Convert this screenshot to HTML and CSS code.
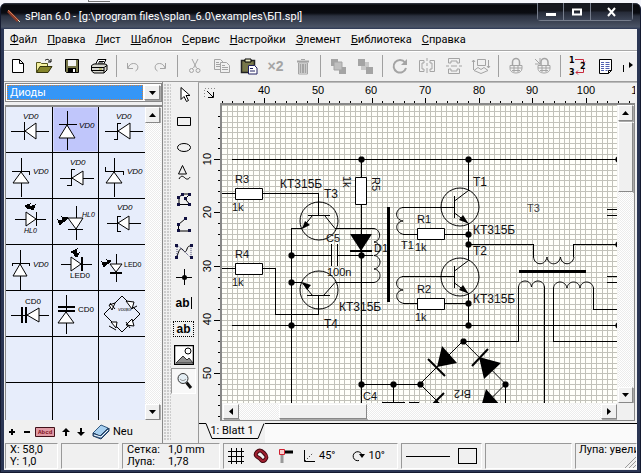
FILE: index.html
```html
<!DOCTYPE html>
<html lang="ru">
<head>
<meta charset="utf-8">
<title>sPlan 6.0</title>
<link rel="stylesheet" href="styles.css">
</head>
<body>
<div class="backdrop"><i></i></div>
<div class="window">
  <header class="titlebar">
    <svg class="app-icon" width="14" height="14" viewBox="0 0 14 14"><path d="M1 2 11 12" stroke="#8c3a28" stroke-width="3"/><path d="M1 1 12 12" stroke="#d08058"/><path d="M11 11l2 2" stroke="#f0e0c0"/></svg>
    <h1>sPlan 6.0 - [g:\program files\splan_6.0\examples\БП.spl]</h1>
    <div class="win-buttons">
      <button class="wb-min" aria-label="Свернуть"><svg width="12" height="10"><path d="M1 6h10v3H1z" fill="#fff"/></svg></button>
      <button class="wb-max" aria-label="Развернуть"><svg width="12" height="10"><path d="M2 2.500h8v5H2z" fill="none" stroke="#fff" stroke-width="2"/></svg></button>
      <button class="wb-close" aria-label="Закрыть"><svg width="12" height="10"><path d="M2 1l7 8M9 1 2 9" stroke="#fff" stroke-width="2"/></svg></button>
    </div>
  </header>

  <nav class="menu">
    <button><u>Ф</u>айл</button><button><u>П</u>равка</button><button><u>Л</u>ист</button><button><u>Ш</u>аблон</button><button><u>С</u>ервис</button><button><u>Н</u>астройки</button><button><u>Э</u>лемент</button><button><u>Б</u>иблиотека</button><button><u>С</u>правка</button>
  </nav>

  <div class="toolbar">
    <button aria-label="Новый"><svg class="ic" viewBox="0 0 20 20"><path d="M4.500 3.500h7l4 4v9h-11zM11.500 3.500v4h4" fill="#fff" stroke="#000"/></svg></button>
    <button aria-label="Открыть"><svg class="ic" viewBox="0 0 20 20"><path d="M1.500 16V6.500h4l1 1h6V10" fill="#f4f0a0" stroke="#55551a"/><path d="M1.500 16.500 5 10.500h12l-4 6z" fill="#85852a" stroke="#33330c"/><path d="M10 4.500c2-2 4-1 5 1M16 3v3h-3" fill="none" stroke="#000"/></svg></button>
    <button aria-label="Сохранить"><svg class="ic" viewBox="0 0 20 20"><path d="M3.500 3.500h13v13h-12l-1-1z" fill="#77774a" stroke="#000"/><path d="M6 4h8v6H6z" fill="#f4f4f4"/><path d="M6 12h8v5H6z" fill="#000"/><path d="M11 13h2v3h-2z" fill="#fff"/></svg></button>
    <button aria-label="Печать"><svg class="ic" viewBox="0 0 20 20"><path d="M6.500 8.500 9 3.500h8l-2.500 5z" fill="#fff" stroke="#000"/><path d="M10 5.500h5M9 7h5" stroke="#000"/><path d="M2.500 9.500 5 8h11l2 1v5l-3 3H5l-2.500-2z" fill="#d8d8d0" stroke="#000"/><path d="M2 11.500h13l3-2M3 14.500h12M15 12v5" stroke="#000" fill="none"/><path d="M10 13h3" stroke="#a0a020"/></svg></button>
    <span class="sep first"></span>
    <button disabled aria-label="Отменить"><svg class="ic gray" viewBox="0 0 20 20"><path d="M4.500 7v5.500H10M5 12c1-3 3-4.500 5.500-4.500 4 0 5 3 4 5.500-.5 1-1 1.500-2 2"/></svg></button>
    <button disabled aria-label="Вернуть"><svg class="ic gray" viewBox="0 0 20 20"><path d="M15.500 7v5.500H10M15 12c-1-3-3-4.500-5.500-4.500-4 0-5 3-4 5.500.5 1 1 1.500 2 2"/></svg></button>
    <span class="sep"></span>
    <button disabled aria-label="Вырезать"><svg class="ic gray" viewBox="0 0 20 20"><path d="M7 3l4.500 9M13 3l-4.500 9M8 12l-1 1M12 12l1 1"/><circle cx="6.500" cy="14.500" r="2"/><circle cx="13" cy="14.500" r="2"/></svg></button>
    <button disabled aria-label="Копировать"><svg class="ic gray" viewBox="0 0 20 20"><path d="M2.500 3.500h6l3 3v7h-9zM4 6.500h3M4 8.500h5M4 10.500h5"/><path d="M8.500 6.500h6l3 3v7h-9z" fill="#f0f0f0"/><path d="M10 9.500h3M10 11.500h6M10 13.500h6"/></svg></button>
    <button aria-label="Вставить"><svg class="ic" viewBox="0 0 20 20"><path d="M2.500 4.500h13v12h-13z" fill="#77774a" stroke="#222" stroke-width="1.500"/><path d="M6 3h6v3H6z" fill="#e8e8c0" stroke="#000"/><path d="M9.500 9.500h6l2.500 2.500v6H9.500z" fill="#fff" stroke="#202060"/><path d="M11 12.500h3M11 15h5" stroke="#202060"/></svg></button>
    <button disabled class="times-two">×2</button>
    <button disabled aria-label="Удалить"><svg class="ic gray" viewBox="0 0 20 20"><path d="M4 5.500h12" stroke-width="2"/><path d="M8 3.500h4M5.500 7h9v11h-9z"/><path d="M7.500 8v9M10 8v9M12.500 8v9" stroke-width="2"/></svg></button>
    <span class="sep"></span>
    <button disabled aria-label="На передний план"><svg class="ic grayfill" viewBox="0 0 20 20"><path d="M3 3h7v7H3zM11 11h7v7h-7z"/><path d="M6 6h8v8H6z" fill="#c0c0c0" stroke="#a4a4a4"/></svg></button>
    <button disabled aria-label="На задний план"><svg class="ic grayfill" viewBox="0 0 20 20"><path d="M6 6h8v8H6z" fill="#c8c8c8"/><path d="M3 3h7v7H3zM11 11h7v7h-7z"/></svg></button>
    <span class="sep"></span>
    <button disabled aria-label="Повернуть"><svg class="ic gray" viewBox="0 0 20 20"><path d="M15 6.500A6.300 6.300 0 1 0 16 12" stroke-width="2"/><path d="M17 3v6h-6z" fill="#a4a4a4" stroke="none"/></svg></button>
    <button disabled aria-label="Отразить по горизонтали"><svg class="ic gray" viewBox="0 0 20 20"><path d="M10 2v3M10 7v3M10 12v5M7 4.500H2.500v11H7V13H5V7h2zM13 4.500h4.500v11H13V13h2V7h-2z"/></svg></button>
    <button disabled aria-label="Отразить по вертикали"><svg class="ic gray" viewBox="0 0 20 20"><path d="M2 10h3M7 10h6M15 10h3M4.500 7V2.500h11V7H13V5H7v2zM4.500 13v4.500h11V13H13v2H7v-2z"/></svg></button>
    <button disabled aria-label="Выровнять"><svg class="ic gray" viewBox="0 0 20 20"><path d="M2.500 14V4M1 6l1.500-2L4 6M6.500 3.500h8v6h-8zM17.500 4v8M16 10l1.500 2 1.500-2M3 14.500l4-3 3 2 3-2 4 3-7 3z"/></svg></button>
    <span class="sep"></span>
    <button disabled aria-label="Закрепить"><svg class="ic gray" viewBox="0 0 20 20"><path d="M6.500 9V6a3.500 3.500 0 0 1 7 0v3" stroke-width="1.500"/><path d="M4 9.500h12v3c0 3-3 4.500-6 4.500s-6-1.500-6-4.500zM4 12h12M6 14.500h8M8 10v6M12 10v6"/></svg></button>
    <button disabled aria-label="Открепить"><svg class="ic gray" viewBox="0 0 20 20"><path d="M8 9V6a3.500 3.500 0 0 1 7 0v3" stroke-width="1.500"/><path d="M5 9.500h12v3c0 3-3 4.500-6 4.500s-6-1.500-6-4.500zM5 12h12M7 14.500h8M9 10v6M13 10v6M2 3l5 5M7 2v6M2 8h5"/></svg></button>
    <span class="sep"></span>
    <button aria-label="Нумерация"><svg class="ic" viewBox="0 0 20 20"><path d="M7 3.500h8.500V7M14 5.500l1.500 2 1.500-2M15.500 13v3.500H8M10 14.500l-2 2 2 2" fill="none" stroke="#c8283c"/><text class="digit" x="1" y="7">1</text><text class="digit" x="12" y="13">2</text><text class="digit" x="1" y="19">3</text></svg></button>
    <button aria-label="Список"><svg class="ic" viewBox="0 0 20 20"><path d="M4.500 3.500h12v11l-3 3h-9z" fill="#fff" stroke="#000"/><path d="M13.500 17.500v-3h3" fill="none" stroke="#000"/><path d="M6 6.500h3M10.500 6.500h4M6 8.500h3M10.500 8.500h4M6 10.500h3M10.500 10.500h4M6 12.500h3M10.500 12.500h4M6 14.500h3M10.500 14.500h2" stroke="#5060b0"/></svg></button>
    <button class="more" aria-label="Ещё"><svg width="12" height="14"><path d="M1.500 6v7" stroke="#000"/><path d="M7 3v6l4-3z"/></svg></button>
  </div>

  <main class="work">
    <aside class="library">
      <div class="combo">
        <select aria-label="Группа библиотеки"><option>Диоды</option></select>
        <span class="combo-arrow"><svg width="7" height="4"><path d="M0 0h7L3.500 4z"/></svg></span>
      </div>
      <div class="palette">
        <div class="cells">
          <button><svg class="sym"><path d="M5 24h38"/><path d="M18 15v18"/><path class="w" d="M19 24 30 16v16z"/><text x="17" y="12">VD0</text></svg></button>
          <button class="selected"><svg class="sym"><path d="M14 4v39M6 17h18"/><path class="w" d="M14 18 6 31h16z"/><text x="26" y="21">VD0</text></svg></button>
          <button><svg class="sym"><path d="M6 24h38M22 16h-4v16h-3"/><path class="w" d="M19 24 31 16v16z"/><text x="17" y="12">VD0</text></svg></button>
          <button><svg class="sym"><path d="M15 5v39M6 18h17v4"/><path class="w" d="M15 19 7 30h16z"/><text x="27" y="21">VD0</text></svg></button>
          <button><svg class="sym"><path d="M7 25h34M22 16h-4v16h-4"/><path class="w" d="M19 25l11-7v14z"/><text x="17" y="12">VD0</text></svg></button>
          <button><svg class="sym"><path d="M15 5v39M6 14v4h18v4"/><path class="w" d="M15 19 7 30h16z"/><text x="28" y="21">VD0</text></svg></button>
          <button><svg class="sym"><path d="M9 20h31M30 13v14"/><path class="w" d="M20 13v14l10-7z"/><path class="b" d="M19 7l5-2-1 5zM23 8l6-2-2 5z"/><text class="s" x="18" y="34">HL0</text></svg></button>
          <button><svg class="sym"><path d="M23 7v34M15 30h15"/><path class="w" d="M15 19h15l-7 11z"/><path class="b" d="M5 21l6 1-4 4zM9 18l6 1-4 4z"/><text class="s" x="29" y="18">HL0</text></svg></button>
          <button><svg class="sym"><path d="M8 24h34M22 17h-4v15h4"/><path class="w" d="M19 24l11-7v14z"/><text x="18" y="11">VD0</text></svg></button>
          <button><svg class="sym"><path d="M14 5v40M6 21v-3h17v3"/><path class="w" d="M14 19 7 31h14z"/><text x="27" y="22">VD0</text></svg></button>
          <button><svg class="sym"><path d="M8 19h31"/><path d="M29 12v14" stroke-width="2"/><path class="w" d="M18 12v14l10-7z"/><path class="b" d="M18 7l6-3-1 5zM21 10l5-2-2 4z"/><text class="r" x="17" y="33">LED0</text></svg></button>
          <button><svg class="sym"><path d="M17 9v28"/><path d="M11 28h12" stroke-width="2"/><path class="w" d="M11 19h12l-6 8z"/><path class="b" d="M3 17l6 1-4 4zM8 15l4 1-3 3z"/><text class="r led" x="25" y="22">LED0</text></svg></button>
          <button><svg class="sym"><path d="M5 24h38"/><path d="M16 16v16M20 16v16" stroke-width="2"/><path class="w" d="M21 24l12-7v14z"/><text class="r" x="19" y="13">CD0</text></svg></button>
          <button><svg class="sym"><path d="M13 4v39"/><path d="M5 16h17M5 20h17" stroke-width="2"/><path class="w" d="M13 21 5 32h16z"/><text class="r" x="25" y="21">CD0</text></svg></button>
          <button><svg class="sym aa"><path d="M23 5 41 23 23 41 5 23z"/><path class="w" d="M10 14l3 5 3-7zM27 10l8 1-2 7zM12 31l6 0-1 6zM27 34l6-6 2 7zM11 12l5 6M32 18l6-3M10 35l7 4M27 31l4 6"/><text class="tiny" x="19" y="20">VD0$G</text></svg></button>
          <button></button><button></button><button></button><button></button><button></button><button></button>
        </div>
        <div class="vscroll">
          <button aria-label="Вверх"><svg width="7" height="4"><path d="M0 4h7L3.500 0z"/></svg></button>
          <span class="track"></span>
          <button aria-label="Вниз"><svg width="7" height="4"><path d="M0 0h7L3.500 4z"/></svg></button>
        </div>
      </div>
      <div class="lib-tools">
        <button aria-label="Добавить"><svg width="14" height="14"><path d="M7 4v6M4 7h6" stroke="#000" stroke-width="2"/></svg></button>
        <button aria-label="Убрать"><svg width="14" height="14"><path d="M4 7h6" stroke="#000" stroke-width="2"/></svg></button>
        <button aria-label="Переименовать"><svg width="20" height="12"><path d="M.500 1.500h19v9H.500z" fill="#e09aa4" stroke="#401018"/><text class="abcd" x="3" y="8">Abcd</text></svg></button>
        <button class="gap" aria-label="Выше"><svg width="14" height="14"><path d="M7 3l4 4H8v4H6V7H3z"/></svg></button>
        <button aria-label="Ниже"><svg width="14" height="14"><path d="M7 11l4-4H8V3H6v4H3z"/></svg></button>
        <button class="new"><svg width="18" height="16"><path d="M1 9 9 1l7 3-8 8z" fill="#a8d0f0" stroke="#305880"/><path d="M1 9v3l8 3 8-8V4l-9 8z" fill="#4878a8" stroke="#203858"/><path d="M2 11l7 2 7-7" stroke="#fff" fill="none"/></svg>Neu</button>
      </div>
    </aside>

    <div class="grip"></div>

    <div class="tools">
      <button aria-label="Выбор"><svg class="ic" viewBox="0 0 20 20"><path d="M7 2.500v12l3-3 2.500 5 2-1-2.500-5h4z" fill="#fff" stroke="#000"/></svg></button>
      <button aria-label="Прямоугольник"><svg class="ic" viewBox="0 0 20 20"><path d="M3.500 6.500h13v8h-13z" class="ln"/></svg></button>
      <button aria-label="Эллипс"><svg class="ic" viewBox="0 0 20 20"><ellipse cx="10" cy="10.500" rx="6.500" ry="4" class="ln"/></svg></button>
      <button aria-label="Фигура"><svg class="ic" viewBox="0 0 20 20"><path class="ln" d="M8.500 2.500 4.500 11h8zM5 16c2-4 4-3 6-1s4 1 5-1"/></svg></button>
      <button aria-label="Многоугольник"><svg class="ic" viewBox="0 0 20 20"><path class="ln" d="M5 15.500V8l4-3h7l-5 5 5 5.500z"/><path d="M3 14h3v3H3zM3 7h3v3H3zM7 4h3v3H7zM14 4h3v3h-3zM10 8h3v3h-3zM14 14h3v3h-3z" fill="#101040"/></svg></button>
      <button aria-label="Ломаная"><svg class="ic" viewBox="0 0 20 20"><path class="ln" d="M11 4 4.500 9.500v6.500H16"/><path d="M10 2h3v3h-3zM3 8h3v3H3zM3 14h3v3H3zM14 14h3v3h-3z" fill="#101040"/></svg></button>
      <button aria-label="Кривая"><svg class="ic" viewBox="0 0 20 20"><path class="ln" d="M3 16c2-8 4-10 6-7s3 2 4-1 2-3 4-3"/><path d="M3 4v12M3 4l6 5 8 8V5" fill="none" stroke="#404070" stroke-dasharray="1 1"/><path d="M1 3h3v3H1zM1 15h3v3H1zM16 3h3v3h-3zM16 15h3v3h-3z" fill="#101040"/></svg></button>
      <button aria-label="Узел"><svg class="ic" viewBox="0 0 20 20"><path class="ln" d="M10.500 2v16M2 10.500h16"/><circle cx="10.500" cy="10.500" r="2.500"/></svg></button>
      <button class="txt">ab<i class="caret"></i></button>
      <button class="txt"><span>ab</span></button>
      <button aria-label="Картинка"><svg class="ic" viewBox="0 0 20 20"><path d="M.500.500h19v19H.500z" fill="#fff" stroke="#000" stroke-width="1.500"/><circle cx="14" cy="6" r="3" class="ln"/><path d="M2 18l7-7 4 4 2-2 4 5z" fill="#909090" stroke="#333"/></svg></button>
      <button class="active" aria-label="Лупа"><svg class="ic" viewBox="0 0 20 20"><circle cx="9" cy="7.500" r="5" fill="#e4eef4" stroke="#333"/><path d="M6 8c2 2 4 2 6 0" fill="none" stroke="#888"/><path d="M12.500 11.500 17 17" stroke="#111" stroke-width="3"/></svg></button>
    </div>

    <section class="editor">
      <div class="corner"><svg width="16" height="14"><path d="M1.500 10V1.500H12" fill="none" stroke="#888" stroke-dasharray="1 2"/><path d="M4 4l6 6M10.500 5v5.500H5" fill="none" stroke="#000"/></svg></div>
      <div class="ruler-x"><svg class="fill"><g transform="translate(-220 -83)">
        <path d="M264.500 98v6M318.500 98v6M372.500 98v6M425.500 98v6M479.500 98v6M532.500 98v6M586.500 98v6M222.500 101v3M232.500 101v3M243.500 101v3M254.500 101v3M275.500 101v3M286.500 101v3M296.500 101v3M307.500 101v3M329.500 101v3M339.500 101v3M350.500 101v3M361.500 101v3M382.500 101v3M393.500 101v3M404.500 101v3M414.500 101v3M436.500 101v3M447.500 101v3M457.500 101v3M468.500 101v3M490.500 101v3M500.500 101v3M511.500 101v3M522.500 101v3M543.500 101v3M554.500 101v3M565.500 101v3M575.500 101v3M597.500 101v3M607.500 101v3M618.500 101v3M629.500 101v3"/>
        <text x="264" y="94">40</text><text x="318" y="94">50</text><text x="371" y="94">60</text><text x="425" y="94">70</text><text x="479" y="94">80</text><text x="532" y="94">90</text><text x="586" y="94">100</text><text x="640" y="94">110</text></g></svg></div>
      <div class="ruler-y"><svg class="fill"><g transform="translate(-199 -103)">
        <path d="M214 159.500h6M214 212.500h6M214 266.500h6M214 320.500h6M214 373.500h6M218 116.500h2M218 127.500h2M218 138.500h2M218 148.500h2M218 170.500h2M218 180.500h2M218 191.500h2M218 202.500h2M218 223.500h2M218 234.500h2M218 245.500h2M218 255.500h2M218 277.500h2M218 287.500h2M218 298.500h2M218 309.500h2M218 330.500h2M218 341.500h2M218 352.500h2M218 362.500h2M218 384.500h2M218 395.500h2M218 405.500h2M218 416.500h2"/>
        <g><text transform="translate(211 159) rotate(-90)">10</text><text transform="translate(211 212) rotate(-90)">20</text><text transform="translate(211 266) rotate(-90)">30</text><text transform="translate(211 319) rotate(-90)">40</text><text transform="translate(211 373) rotate(-90)">50</text></g></g></svg></div>

      <div class="sheet-frame">
        <div class="sheet">
          <svg class="fill drawing">
            <defs>
              <pattern id="grid" x="42" y="54" width="75" height="75" patternUnits="userSpaceOnUse">
                <path d="M.500 0v75M5.500 0v75M11.500 0v75M16.500 0v75M21.500 0v75M27.500 0v75M32.500 0v75M38.500 0v75M43.500 0v75M48.500 0v75M54.500 0v75M59.500 0v75M64.500 0v75M70.500 0v75M0 .500h75M0 5.500h75M0 11.500h75M0 16.500h75M0 21.500h75M0 27.500h75M0 32.500h75M0 38.500h75M0 43.500h75M0 48.500h75M0 54.500h75M0 59.500h75M0 64.500h75M0 70.500h75" stroke="#c2c2ba"/>
              </pattern>
              <g id="dot"><path d="M-3-1.500-1.500-3h3L3-1.500v3L1.500 3h-3L-3 1.500z" class="b"/></g>
              <g id="npn">
                <circle r="19"/><path d="M-5.500-11V11"/><path d="M-5.500-6 8.500-16.500M-5.500 6 8.500 16.500"/><path class="b" d="M8.500 16.500-1 13l4-5z"/>
              </g>
            </defs>
            <rect width="100%" height="100%" fill="url(#grid)" stroke="none"/>
            <g transform="translate(-222 -105)">
              <g class="wires">
                <path d="M232 159.500H619M232 325.500H619"/>
                <path d="M222 193.500H235M262 193.500H318.500V215M222 268.500H235M262 268.500H275.500V314.500H318.500V295"/>
                <path d="M302 228.500H291.500V405M291 282.500H302M291 255.500H332M337 255.500H373M331.500 244V266M337.500 244V266"/>
                <path d="M361.500 159V177M361.500 205V405M361 384.500H420M393.500 384V402M382 402.500H405M409 402.500H419"/>
                <path d="M402 207.500H454M403 234.500H417M445 234.500H468M402 276.500H454M403 303.500H417M445 303.500H468"/>
                <path d="M468.500 159V191M468.500 223V260M468.500 293V325M468 244.500H533.500V257M573.500 257V244.500H619"/>
                <path d="M463 341.500H518.500V287M544.500 287V405M553.500 288V341.500H619M593.500 288V309.500H619M505.500 384V405"/>
                <path d="M607 209.500H619M607 215.500H619M607 276.500H619M607 282.500H619"/>
                <path d="M388.500 207V302" stroke-width="3"/><path d="M519 271.500H586" stroke-width="3"/><path d="M350 251H372" stroke-width="2"/>
              </g>
              <path d="M335 228.500H374c7 1 8 12 0 13.500c8 1 8 12 0 13.500c8 1 8 12 0 13.500c8 1 8 12 0 13.500H335"/>
              <path d="M403 207.500c-8 1-9 12 0 13.500c-9 1-8 12 1 13.500M403 276.500c-8 1-9 12 0 13.500c-9 1-8 12 1 13.500"/>
              <path d="M533.500 257c1 9 12 9 13.500 0c1 9 12 9 13.500 0c1 9 12 9 13.500 0"/>
              <path d="M518.500 287c1-8 12-8 13 0c1-8 12-8 13 0M553.500 288c1-8 12-8 13.500 0c1-8 12-8 13 0c1-8 12-8 13.500 0"/>
              <g class="parts"><path d="M235.500 188.500h27v11h-27zM235.500 263.500h27v11h-27zM355.500 177.500h11v27h-11zM417.500 228.500h27v11h-27zM417.500 298.500h27v11h-27z"/></g>
              <path class="b" d="M350 234h22l-11 17z"/>
              <use href="#npn" x="460" y="207"/><use href="#npn" x="460" y="277"/>
              <circle cx="319" cy="221" r="19"/><path d="M308 215.500H330M312 216 302 228.500M325 216l10 12.500"/><path class="b" d="M302 229l3-8 5 4z"/>
              <circle cx="319" cy="290" r="19"/><path d="M307 295.500H330M312 295 302 282.500M324 295l11-12.500"/><path class="b" d="M302 282l9 3-4 5z"/>
              <path d="M463 341 420 384 463 427 505.500 384z"/>
              <path class="b" d="M442 346l15 17-20 4zM479 357l22 6-17 16zM436 400l13 10-17-5zM486 389l-5 18 20-1z"/>
              <path d="M428 359l17 17M488 349l-16 17M444 393l-14 14" stroke-width="2"/>
              <use href="#dot" x="361.500" y="159.500"/><use href="#dot" x="468.500" y="159.500"/><use href="#dot" x="618.500" y="159.500"/>
              <use href="#dot" x="291.500" y="255.500"/><use href="#dot" x="291.500" y="282.500"/><use href="#dot" x="291.500" y="325.500"/><use href="#dot" x="361.500" y="255.500"/>
              <use href="#dot" x="468.500" y="234.500"/><use href="#dot" x="468.500" y="244.500"/><use href="#dot" x="468.500" y="303.500"/><use href="#dot" x="468.500" y="325.500"/>
              <use href="#dot" x="618.500" y="244.500"/><use href="#dot" x="618.500" y="325.500"/><use href="#dot" x="361.500" y="384.500"/><use href="#dot" x="393.500" y="384.500"/>
              <use href="#dot" x="420.500" y="384.500"/><use href="#dot" x="463.500" y="341.500"/><use href="#dot" x="505.500" y="384.500"/>
              <g class="labels">
                <text x="235" y="183">R3</text><text x="232" y="211">1k</text><text x="235" y="258">R4</text><text x="232" y="286">1k</text>
                <text x="417" y="223">R1</text><text x="415" y="251">1k</text><text x="417" y="293">R2</text><text x="415" y="321">1k</text>
                <text x="326" y="242">C5</text><text x="327" y="276">100n</text><text x="374" y="252">D1</text><text x="401" y="249">T1</text><text x="363" y="400">C4</text>
                <text class="dim" x="527" y="212">T3</text>
                <text transform="translate(343 176) rotate(90)">1k</text><text transform="translate(372 177) rotate(90)">R5</text><text transform="translate(471 390) rotate(180)">Br2</text>
                <g class="large"><text x="324" y="198">T3</text><text x="324" y="328">T4</text><text x="473" y="186">T1</text><text x="473" y="255">T2</text><text x="280" y="188">КТ315Б</text><text x="339" y="311">КТ315Б</text><text x="473" y="234">КТ315Б</text><text x="473" y="303">КТ315Б</text></g>
              </g>
            </g>
          </svg>
        </div>
        <div class="vscroll">
          <button aria-label="Вверх"><svg width="7" height="4"><path d="M0 4h7L3.500 0z"/></svg></button>
          <span class="thumb"></span><span class="track"></span>
          <button aria-label="Вниз"><svg width="7" height="4"><path d="M0 0h7L3.500 4z"/></svg></button>
        </div>
        <div class="hscroll">
          <button aria-label="Влево"><svg width="4" height="7"><path d="M4 0v7L0 3.500z"/></svg></button>
          <span class="track lead"></span><span class="thumb"></span><span class="track"></span>
          <button aria-label="Вправо"><svg width="4" height="7"><path d="M0 0v7l4-3.500z"/></svg></button>
        </div>
        <div class="size-box"></div>
      </div>

      <div class="tabs">
        <button class="tab"><svg width="66" height="17"><path d="M0 .500H7L13 15.500H59L65 .500" fill="#f4f4f4" stroke="#000"/></svg><span>1: Blatt 1</span></button>
        <span class="tab-rest"></span>
      </div>
    </section>
  </main>

  <footer class="status">
    <div class="pane pos"><span>X: 58,0</span><span>Y: 1,0</span></div>
    <div class="pane blank"></div>
    <div class="pane zoom"><span>Сетка:</span><span>1,0 mm</span><span>Лупа:</span><span>1,78</span></div>
    <div class="pane snap">
      <button aria-label="Сетка"><svg width="16" height="16"><path d="M3.500 0v16M8.500 0v16M13.500 0v16M0 3.500h16M0 8.500h16M0 13.500h16" stroke="#000"/></svg></button>
      <button aria-label="Привязка"><svg width="16" height="16"><path d="M4 4c3-3 5-1 7 1s4 4 1 7-4-1-6-2-5-3-2-6z" fill="none" stroke="#400810" stroke-width="4"/><path d="M4 4c3-3 5-1 7 1s4 4 1 7-4-1-6-2-5-3-2-6z" fill="none" stroke="#a02030" stroke-width="2"/></svg></button>
      <button aria-label="Узлы"><svg width="16" height="16"><path d="M4 5v10" stroke="#999" stroke-width="3"/><path d="M7 4h8" stroke="#000" stroke-width="3"/><path d="M1.500 1.500h5v5h-5z" fill="#f8d0d0" stroke="#d02030"/></svg></button>
      <button class="angle"><svg width="13" height="14"><path d="M1.500 1v11.500H12" fill="none" stroke="#000"/><path d="M2 12 10 4" stroke="#000" stroke-dasharray="1 2"/></svg>45°</button>
      <button class="angle turn"><svg width="13" height="14"><path d="M10 6A4.500 4.500 0 1 0 7 11.500" fill="none" stroke="#000"/><path d="M7 5h6l-3 4z"/></svg>10°</button>
    </div>
    <div class="pane style"><i class="line"></i><i class="box"></i></div>
    <div class="pane blank wide"></div>
    <div class="pane hint"><span>Лупа: увеличение</span><svg class="resizer" width="12" height="12"><path d="M1 12 12 1M5 12l7-7M9 12l3-3" stroke="#999"/></svg></div>
  </footer>
</div>
</body>
</html>
```

FILE: styles.css
```css
* { box-sizing: border-box; }
body {
  margin: 0;
  height: 100vh;
  display: flex;
  flex-direction: column;
  overflow: hidden;
  background: #f4f5fb;
  color: #000;
  font: 11px/14px Roboto, "Liberation Sans", sans-serif;
}
button {
  margin: 0;
  padding: 0;
  border: 0;
  background: none;
  color: inherit;
  font: inherit;
  display: flex;
  align-items: center;
  justify-content: center;
}
svg { display: block; flex: none; }
.backdrop { height: 3px; flex: none; padding-left: 88px; }
.backdrop i { display: block; width: 22px; height: 2px; border: solid #777; border-width: 0 0 1px 1px; }

.window {
  flex: 1;
  min-height: 0;
  display: flex;
  flex-direction: column;
  padding: 0 3px 2px;
  background: #2b3654;
  border: solid #141a30;
  border-width: 0 1px 1px;
  border-radius: 6px 6px 0 0;
  overflow: hidden;
}

.titlebar {
  height: 26px;
  flex: none;
  margin: 0 -3px;
  padding: 0 7px 0 6px;
  display: flex;
  align-items: center;
  background: linear-gradient(#3a3f4c 0, #07080c 2px, #0a0c12 10px, #2b3140 13px, #4a5365 24px, #2b3654 26px);
}
.titlebar h1 {
  flex: 1;
  margin: 2px 0 0 4px;
  overflow: hidden;
  white-space: nowrap;
  color: #fff;
  font-size: 11px;
  line-height: 18px;
  font-weight: 400;
}
.win-buttons {
  align-self: flex-start;
  display: flex;
  height: 18px;
  border: 1px solid #767d8c;
  border-top: 0;
  border-radius: 0 0 4px 4px;
}
.win-buttons button { width: 27px; background: linear-gradient(#16181f 8px, #262b38 9px, #3c4456); }
.win-buttons button + button { border-left: 1px solid #767d8c; }
.win-buttons .wb-min { width: 25px; }
.win-buttons .wb-close { width: 42px; }

.menu {
  height: 21px;
  flex: none;
  display: flex;
  gap: 10px;
  padding: 0 6px;
  background: #f0f0f0;
}

.toolbar {
  height: 32px;
  flex: none;
  display: flex;
  align-items: center;
  overflow: hidden;
  background: #f0f0f0;
  border-top: 1px solid #a8a8a8;
  border-bottom: 1px solid #9c9c9c;
  box-shadow: inset 0 1px #fff;
}
.toolbar button { width: 27px; height: 28px; flex: none; }
.toolbar .more { flex: 1; min-width: 12px; }
.toolbar .times-two { color: #a4a4a4; font: 700 14px/18px "Liberation Sans", sans-serif; }
.sep { width: 8px; height: 22px; flex: none; border-left: 1px solid #a0a0a0; margin-left: 4px; margin-right: -4px; }
.sep.first { width: 7px; }
.ic { width: 20px; height: 20px; }
.gray { fill: none; stroke: #a4a4a4; }
.grayfill { fill: #a4a4a4; }
.digit { font: 700 8px "DejaVu Sans", sans-serif; }
.ln { fill: none; stroke: #000; }

.work { flex: 1; min-height: 0; display: flex; background: #f0f0f0; }

.library { width: 158px; flex: none; display: flex; flex-direction: column; margin-left: 1px; border-right: 1px solid #888; }
.combo { position: relative; height: 19px; flex: none; background: #fff; border: 1px solid #888; margin-top: 1px; padding: 1px; }
.combo select {
  appearance: none;
  display: block;
  width: calc(100% - 17px);
  height: 15px;
  padding: 0 2px;
  border: 1px dotted #d08040;
  border-radius: 0;
  background: #3596f6;
  color: #fff;
  font: inherit;
  line-height: 13px;
}
.combo-arrow, .vscroll button, .hscroll button, .thumb {
  background: #f0f0f0;
  border: 1px solid;
  border-color: #fff #888 #888 #fff;
  box-shadow: 1px 1px #aaa;
}
.combo-arrow {
  position: absolute;
  top: 1px;
  right: 1px;
  width: 16px;
  height: 15px;
  display: flex;
  align-items: center;
  justify-content: center;
  pointer-events: none;
}
.palette { flex: 1; min-height: 0; margin-top: 3px; display: flex; border-top: 2px solid #888; border-left: 1px solid #888; }
.cells {
  flex: 1;
  display: grid;
  grid-template-columns: 47px 46px 1fr;
  grid-auto-rows: 46px;
  overflow: hidden;
  background: #e7edfb;
}
.cells button { border: solid #000; border-width: 0 1px 1px 0; }
.cells button:nth-child(3n) { border-right: 0; }
.cells .selected { background: #c0c6fb; box-shadow: inset 0 0 0 1px #d4d8fc; }
.sym { width: 46px; height: 45px; align-self: flex-start; fill: none; stroke: #000; shape-rendering: crispEdges; overflow: hidden; }
.sym.aa { shape-rendering: auto; }
.sym .w { fill: #fff; shape-rendering: auto; }
.sym .b { fill: #000; }
.sym text { fill: #000; stroke: none; font: italic 8px "Liberation Sans", sans-serif; }
.sym .s { font-size: 7px; }
.sym .r { font-style: normal; }
.sym .led { font-size: 7px; }
.sym .tiny { font-size: 4px; }

.vscroll { width: 17px; flex: none; display: flex; flex-direction: column; padding-right: 1px; background: #f4f4f4; }
.vscroll button { width: 15px; height: 16px; flex: none; }
.track { flex: 1; background: repeating-conic-gradient(#fff 0 25%, #ececec 0 50%) 0 0 / 2px 2px; }
.lib-tools { height: 23px; flex: none; display: flex; align-items: center; background: #f0f0f0; }
.lib-tools button + button { margin-left: 1px; }
.lib-tools button.gap { margin-left: 4px; }
.lib-tools button.new { gap: 3px; margin-left: 4px; }
.abcd { font: 700 6px "Liberation Mono", monospace; fill: #801020; }

.grip {
  width: 7px;
  flex: none;
  margin: 2px 0 2px 1px;
  background: radial-gradient(circle at 1px 1px, #ccc 0 1px, transparent 1px) 0 0 / 3px 3px;
}
.tools { width: 27px; flex: none; display: flex; flex-direction: column; }
.tools button { height: 26px; flex: none; margin-right: 2px; }
.tools .active { border: 1px solid; border-color: #999 #fff #fff #999; background: #f8f8f8; }
.tools .txt { font: 700 12px/14px "Liberation Sans", sans-serif; }
.tools .txt span { padding: 0 2px; border: 1px dotted #000; }
.caret { width: 1px; height: 12px; margin-left: 1px; background: #000; }

.editor {
  flex: 1;
  min-width: 0;
  display: grid;
  grid-template: 20px 1fr 20px / 21px 1fr;
  border-left: 1px solid #999;
  border-top: 1px solid #bbb;
}
.corner { padding: 4px; overflow: hidden; }
.ruler-x, .ruler-y { overflow: hidden; }
.ruler-x { margin-right: 2px; }
.fill { width: 100%; height: 100%; }
.ruler-x svg, .ruler-y svg { stroke: #000; fill: none; }
.ruler-x text, .ruler-y text { fill: #000; stroke: none; text-anchor: middle; font: 11px "Liberation Sans", sans-serif; }
.sheet-frame {
  min-height: 0;
  min-width: 0;
  display: grid;
  grid-template: 1fr 17px / 1fr 17px;
  border: solid #888;
  border-width: 2px 1px 1px 2px;
  margin-right: 2px;
  margin-bottom: 2px;
  background: #f4f4f4;
}
.sheet { overflow: hidden; background: #fffffa; min-width: 0; min-height: 0; }
.drawing { fill: none; stroke: #000; }
.wires { shape-rendering: crispEdges; }
.parts { fill: #fff; }
.drawing .b { fill: #000; stroke: none; }
.labels { fill: #111; stroke: none; font: 11px "Liberation Sans", sans-serif; }
.labels .large { font-size: 12px; }
.labels .dim { fill: #444; }
.vscroll .thumb { width: 15px; height: 70px; flex: none; margin-top: 1px; }
.sheet-frame .vscroll { padding-left: 1px; }
.hscroll { display: flex; padding: 1px 0 1px 1px; min-width: 0; }
.hscroll button { width: 16px; height: 15px; flex: none; }
.hscroll .thumb { width: 88px; height: 15px; flex: none; }
.hscroll .lead { flex: 0 0 40px; }
.size-box { background: #f0f0f0; }

.tabs { grid-column: 1 / -1; display: flex; background: #f0f0f0; }
.tab { position: relative; width: 66px; height: 17px; }
.tab span { position: absolute; inset: 0; line-height: 16px; white-space: nowrap; }
.tab-rest { flex: 1; background: #fafafa; border-top: 1px solid #000; }

.status { height: 27px; flex: none; display: flex; gap: 3px; padding: 0 0 1px 1px; background: #f0f0f0; overflow: hidden; }
.pane { flex: none; height: 26px; border: 1px solid; border-color: #999 #fff #fff #999; line-height: 12px; white-space: nowrap; overflow: hidden; }
.pos { width: 53px; display: flex; flex-direction: column; padding-left: 4px; }
.blank { width: 58px; }
.zoom { width: 98px; display: grid; grid-template-columns: 41px 1fr; grid-auto-rows: 12px; padding-left: 4px; }
.snap { width: 175px; display: flex; align-items: center; gap: 9px; padding-left: 4px; }
.angle { gap: 3px; }
.snap .turn { margin-left: 8px; }
.style { width: 81px; display: flex; align-items: center; gap: 8px; padding-left: 4px; }
.style .line { width: 44px; height: 1px; background: #000; }
.style .box { width: 19px; height: 16px; border: 1px solid #000; }
.wide { width: 87px; }
.hint { flex: 1; position: relative; padding-left: 3px; }
.resizer { position: absolute; right: 0; bottom: 0; }
```
